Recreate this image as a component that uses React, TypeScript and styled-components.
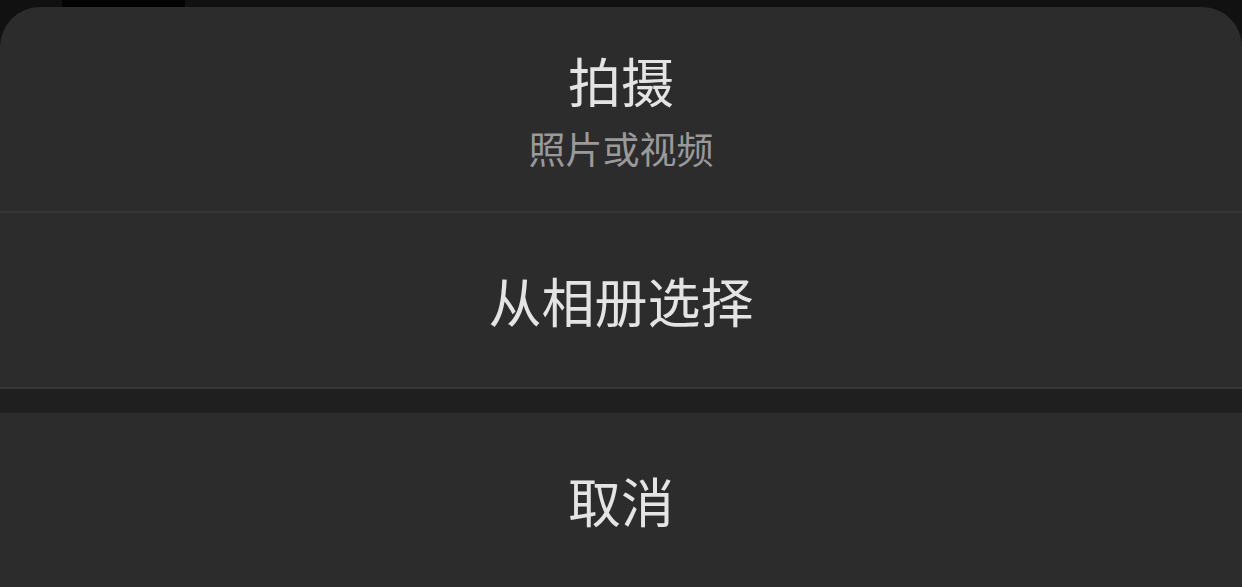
import React from 'react'
import styled, { createGlobalStyle } from 'styled-components'

const GlobalStyle = createGlobalStyle`
  html, body {
    margin: 0;
    padding: 0;
    background: #111111;
    height: 100%;
    overflow: hidden;
  }
  #root {
    height: 100%;
  }
  * {
    box-sizing: border-box;
  }
`

const Page = styled.div`
  display: flex;
  flex-direction: column;
  height: 587px;
  width: 1242px;
  background: #111111;
  font-family: "Noto Sans CJK SC", "Noto Sans", sans-serif;
`

const Backdrop = styled.div`
  display: flex;
  height: 7px;
  flex-shrink: 0;
`

const BackdropBlock = styled.div`
  margin-left: 62px;
  width: 123px;
  height: 100%;
  background: #030303;
`

const Sheet = styled.div`
  flex: 1;
  display: flex;
  flex-direction: column;
  background: #2c2c2c;
  border-radius: 40px 40px 0 0;
  overflow: hidden;
`

const OptionRow = styled.div<{ tall?: boolean }>`
  display: flex;
  flex-direction: column;
  align-items: center;
  justify-content: center;
  height: ${(props) => (props.tall ? '204px' : '174px')};
  padding-top: ${(props) => (props.tall ? '1px' : '0')};
  flex-shrink: 0;
  cursor: pointer;
`

const Divider = styled.div`
  height: 2px;
  background: #363636;
  flex-shrink: 0;
`

const Gap = styled.div`
  height: 24px;
  background: #1f1f1f;
  border-bottom: 1px solid #242424;
  flex-shrink: 0;
`

const Title = styled.div`
  font-size: 53px;
  line-height: 62px;
  color: #e4e4e4;
`

const Subtitle = styled.div`
  font-size: 37px;
  line-height: 44px;
  color: #9a9a9a;
  margin-top: 15px;
`

export default function App() {
  return (
    <>
      <GlobalStyle />
      <Page>
        <Backdrop>
          <BackdropBlock />
        </Backdrop>
        <Sheet>
          <OptionRow tall>
            <Title>拍摄</Title>
            <Subtitle>照片或视频</Subtitle>
          </OptionRow>
          <Divider />
          <OptionRow>
            <Title>从相册选择</Title>
          </OptionRow>
          <Divider />
          <Gap />
          <OptionRow>
            <Title>取消</Title>
          </OptionRow>
        </Sheet>
      </Page>
    </>
  )
}
